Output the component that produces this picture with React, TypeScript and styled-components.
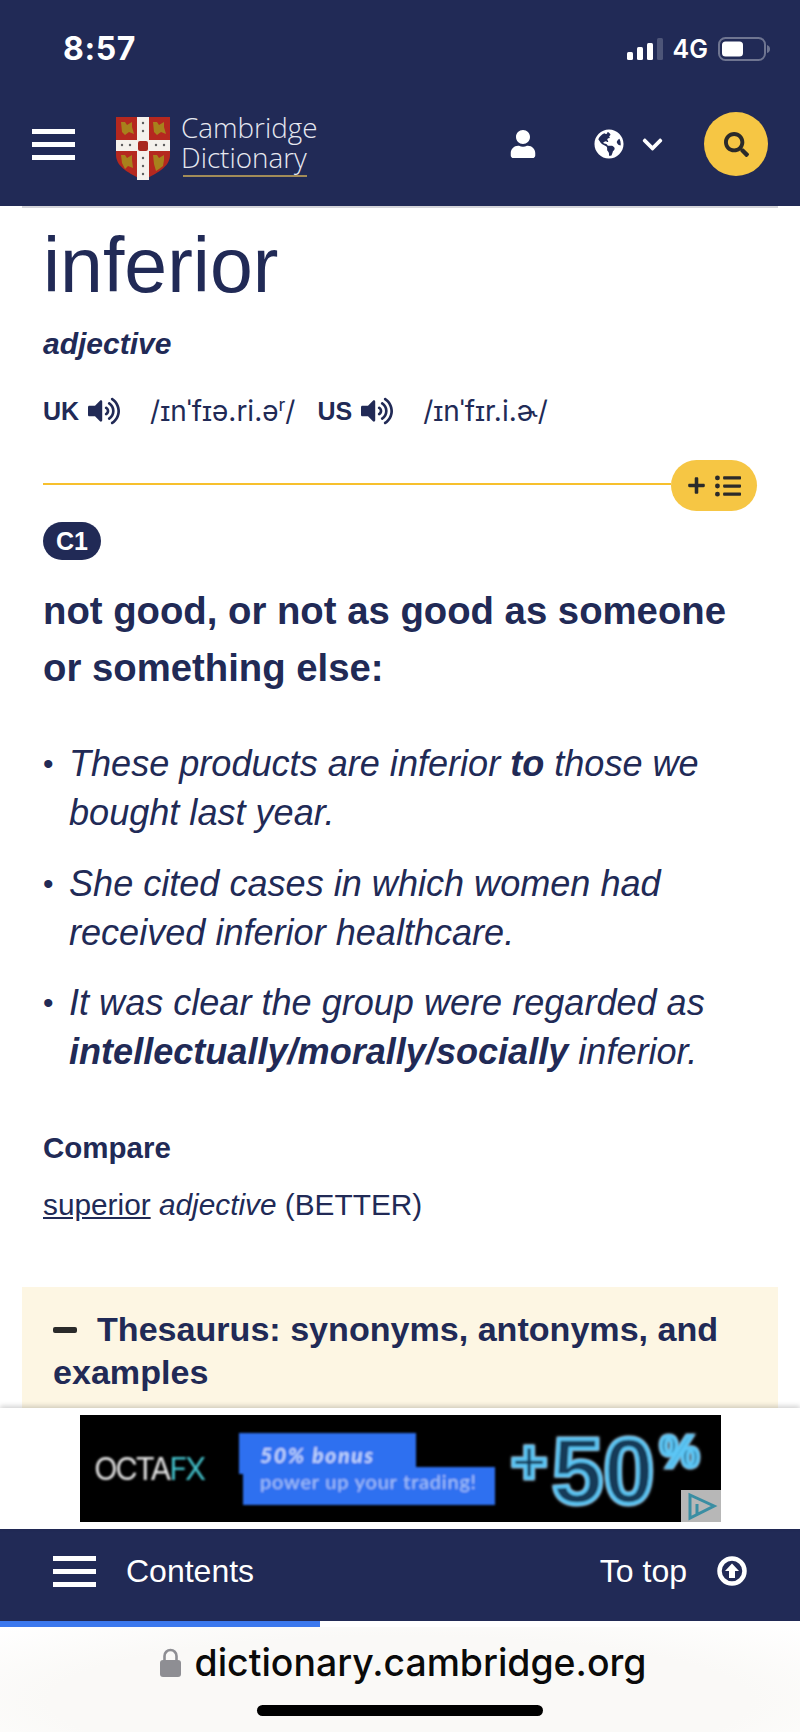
import React from 'react';
import styled, {createGlobalStyle} from 'styled-components';
import {FaChevronDown, FaGlobeAmericas, FaListUl, FaPlus, FaSearch, FaUser, FaVolumeUp} from 'react-icons/fa';

const navy = '#212a56';
const yellow = '#f6c644';

const GlobalStyle = createGlobalStyle`
  html, body {
    margin: 0;
    padding: 0;
    background: #fff;
  }
  * {
    box-sizing: border-box;
  }
`;

const Page = styled.div`
  width: 800px;
  height: 1732px;
  overflow: hidden;
  display: flex;
  flex-direction: column;
  font-family: "Liberation Sans", "DejaVu Sans", sans-serif;
  color: ${navy};
`;

const Header = styled.header`
  height: 206px;
  flex: none;
  background: ${navy};
  color: #fff;
`;

const StatusBar = styled.div`
  height: 100px;
  padding: 31px 30px 0 63px;
  display: flex;
  justify-content: space-between;
  font-family: Inter, sans-serif;
`;

const Time = styled.span`
  font-size: 32px;
  line-height: 36px;
  font-weight: 700;
  letter-spacing: 0.6px;
`;

const StatusIcons = styled.div`
  display: flex;
  align-items: center;
  height: 36px;
  gap: 10px;
`;

const Network = styled.span`
  font-size: 25px;
  font-weight: 600;
`;

const NavRow = styled.div`
  display: flex;
  align-items: center;
  height: 64px;
  margin-top: 12px;
  padding: 0 32px;
`;

const Burger = styled.div<{$width: number}>`
  width: ${p => p.$width}px;
  height: 31px;
  flex: none;
  display: flex;
  flex-direction: column;
  justify-content: space-between;

  > i {
    display: block;
    height: 5px;
    background: #fff;
  }
`;

const Logo = styled.div`
  display: flex;
  align-items: flex-start;
  gap: 11px;
  margin-left: 41px;
  height: 64px;

  > svg {
    margin-top: 5px;
  }
`;

const LogoText = styled.div`
  font-family: "Open Sans", sans-serif;
  font-size: 27.8px;
  font-weight: 300;
  line-height: 30px;
  color: #e6e8f0;

  &::after {
    content: '';
    display: block;
    height: 2px;
    width: 124px;
    background: #a28c58;
    margin: 3px 0 0 2px;
  }
`;

const NavActions = styled.div`
  margin-left: auto;
  display: flex;
  align-items: center;
`;

const UserIcon = styled(FaUser)`
  font-size: 28px;
  margin-right: 57px;
`;

const GlobeIcon = styled(FaGlobeAmericas)`
  font-size: 30px;
  margin-right: 17px;
`;

const Chevron = styled(FaChevronDown)`
  font-size: 23px;
  margin-right: 40px;
`;

const SearchButton = styled.div`
  width: 64px;
  height: 64px;
  border-radius: 50%;
  background: ${yellow};
  color: #2a2a2a;
  display: flex;
  align-items: center;
  justify-content: center;
  font-size: 25px;
`;

const Sheet = styled.main`
  flex: 1;
  min-height: 0;
  overflow: hidden;
  position: relative;

  &::before {
    content: '';
    position: absolute;
    top: 0;
    left: 22px;
    right: 22px;
    height: 2px;
    background: #d5d5da;
  }
`;

const Entry = styled.section`
  padding: 0 43px;
`;

const Headword = styled.h1`
  margin: 0;
  padding-top: 17px;
  font-size: 77px;
  line-height: 84px;
  font-weight: 400;
`;

const PartOfSpeech = styled.div`
  margin-top: 20px;
  font-size: 30px;
  line-height: 34px;
  font-weight: 700;
  font-style: italic;
`;

const PronRow = styled.div`
  display: flex;
  align-items: center;
  height: 36px;
  margin-top: 32px;
`;

const Region = styled.span`
  font-size: 25px;
  font-weight: 700;
`;

const Speaker = styled(FaVolumeUp)`
  font-size: 32px;
  margin-left: 9px;
  flex: none;
`;

const Ipa = styled.span`
  font-family: Inter, "Liberation Sans", sans-serif;
  font-size: 28px;
  margin-left: 30px;
  margin-right: 22px;
  white-space: nowrap;

  sup {
    font-size: 18px;
    line-height: 0;
  }
`;

const DividerRow = styled.div`
  display: flex;
  align-items: center;
  margin-top: 31px;
  height: 51px;
`;

const DividerLine = styled.div`
  flex: 1;
  height: 2px;
  margin-top: -4px;
  background: #f7c02d;
`;

const AddButton = styled.div`
  width: 86px;
  height: 51px;
  border-radius: 26px;
  background: ${yellow};
  color: #2a2a2a;
  display: flex;
  align-items: center;
  justify-content: center;
  gap: 9px;
`;

const PlusIcon = styled(FaPlus)`
  font-size: 19px;
`;

const ListIcon = styled(FaListUl)`
  font-size: 26px;
`;

const Level = styled.span`
  display: inline-flex;
  align-items: center;
  justify-content: center;
  width: 58px;
  height: 38px;
  margin-top: 11px;
  border-radius: 19px;
  background: ${navy};
  color: #fff;
  font-size: 25px;
  font-weight: 700;
`;

const Definition = styled.p`
  margin: 22px 0 0;
  font-size: 38.3px;
  line-height: 57px;
  font-weight: 700;
`;

const Examples = styled.ul`
  list-style: none;
  margin: 43px 0 0;
  padding: 0;
`;

const Example = styled.li`
  position: relative;
  padding-left: 26px;
  margin-bottom: 21.5px;
  font-size: 36.1px;
  line-height: 49px;
  font-style: italic;

  &::before {
    content: '•';
    position: absolute;
    left: 0;
    font-style: normal;
    font-size: 30px;
  }
`;

const CompareLabel = styled.div`
  margin-top: 55px;
  font-size: 29.5px;
  line-height: 34px;
  font-weight: 700;
`;

const CompareLine = styled.div`
  margin-top: 23px;
  font-size: 29.8px;
  line-height: 34px;

  a {
    color: inherit;
    text-decoration: underline;
  }
`;

const Thesaurus = styled.div`
  margin: 65px 22px 0;
  padding: 21px 31px 40px;
  background: #fdf6e3;
  font-size: 34.1px;
  line-height: 43px;
  font-weight: 700;
`;

const Minus = styled.span`
  display: inline-block;
  width: 24px;
  height: 6px;
  margin-right: 20px;
  vertical-align: 8px;
  border-radius: 2px;
  background: #2a2a2a;
`;

const AdBar = styled.div`
  height: 121px;
  flex: none;
  padding-top: 7px;
  display: flex;
  justify-content: center;
  background: #fff;
  box-shadow: 0 -2px 5px rgba(0, 0, 0, 0.18);
  position: relative;
`;

const BottomBar = styled.nav`
  height: 92px;
  flex: none;
  display: flex;
  align-items: center;
  padding: 0 53px 8px;
  background: ${navy};
  color: #fff;
  font-size: 32px;
`;

const Contents = styled.span`
  margin-left: 30px;
`;

const ToTop = styled.span`
  margin-left: auto;
  margin-right: 30px;
`;

const Progress = styled.div`
  height: 6px;
  flex: none;
  background: #fff;

  > div {
    height: 100%;
    background: #3b78ee;
  }
`;

const AddressBar = styled.div`
  height: 105px;
  flex: none;
  background: radial-gradient(ellipse at 50% 70%, #faf9f7 62%, #ffffff 100%);
  display: flex;
  flex-direction: column;
  align-items: center;
`;

const Url = styled.div`
  display: flex;
  align-items: center;
  gap: 14px;
  margin-top: 13px;
  padding-left: 6px;
  height: 44px;
  font-family: Inter, sans-serif;
  font-size: 37.4px;
  font-weight: 500;
  color: #0a0a0a;
`;

const HomeIndicator = styled.div`
  width: 286px;
  height: 11px;
  margin-top: 21px;
  border-radius: 6px;
  background: #000;
`;

const Signal = () => (
  <svg width="36" height="22" viewBox="0 0 36 22">
    <rect x="0" y="14" width="6" height="8" rx="1.5" fill="#fff" />
    <rect x="10" y="9" width="6" height="13" rx="1.5" fill="#fff" />
    <rect x="20" y="5" width="6" height="17" rx="1.5" fill="#fff" />
    <rect x="30" y="0" width="6" height="22" rx="1.5" fill="#4d5578" />
  </svg>
);

const Battery = () => (
  <svg width="52" height="24" viewBox="0 0 52 24">
    <rect x="1" y="1" width="46" height="22" rx="6.5" fill="none" stroke="#6f7591" strokeWidth="2" />
    <rect x="4" y="4.5" width="21" height="15" rx="3.5" fill="#fff" />
    <path d="M49 8 q3 1 3 4 q0 3 -3 4z" fill="#6f7591" />
  </svg>
);

const Shield = () => (
  <svg width="54" height="63" viewBox="0 0 54 63">
    <path d="M0 0H54V38C54 50 40 57 27 63C14 57 0 50 0 38Z" fill="#b5281f" />
    <rect x="21" y="0" width="12" height="63" fill="#f4f1ec" />
    <rect x="0" y="23" width="54" height="11" fill="#f4f1ec" />
    <g fill="#a8811c">
      <path d="M5 5h4l2 3 5-3v5l2 7-5-2-4 3-3-3z" />
      <path d="M37 5h4l2 3 5-3v5l2 7-5-2-4 3-3-3z" />
      <path d="M5 38h4l2 3 5-3v5l1 8-5-2-3 3-3-6z" />
      <path d="M37 38h4l2 3 5-3v5l-1 6-4 3-3 2-2-7z" />
    </g>
    <g fill="#5d5d5d">
      <circle cx="27" cy="6" r="1.2" /><circle cx="27" cy="14" r="1.2" />
      <circle cx="6" cy="28" r="1.2" /><circle cx="14" cy="28" r="1.2" />
      <circle cx="40" cy="28" r="1.2" /><circle cx="48" cy="28" r="1.2" />
      <circle cx="27" cy="41" r="1.2" /><circle cx="27" cy="49" r="1.2" /><circle cx="27" cy="57" r="1.2" />
    </g>
    <rect x="22" y="24" width="10" height="10" rx="2" fill="#a8281f" />
  </svg>
);

const NeonGlyph = ({x, y, size, children}: {x: number, y: number, size: number, children: string}) => (
  <g fontSize={size} fontFamily="'Liberation Sans', sans-serif" fontWeight="700">
    <text x={x} y={y} fill="#10202e" stroke="#7f95a8" strokeWidth="5" filter="url(#glow)">{children}</text>
    <text x={x} y={y} fill="#123a58" stroke="#5cc6f5" strokeWidth="3.5" filter="url(#soft)">{children}</text>
  </g>
);

// banner is one blurry picture in the screenshot
const Banner = () => (
  <svg width="641" height="107" viewBox="0 0 641 107">
    <defs>
      <filter id="soft"><feGaussianBlur stdDeviation="0.8" /></filter>
      <filter id="glow"><feGaussianBlur stdDeviation="1.6" /></filter>
    </defs>
    <rect width="641" height="107" fill="#000" />
    <g filter="url(#soft)" fontFamily="Lato, sans-serif">
      <text x="14" y="65" fontSize="31" letterSpacing="-2.5" fill="#e4e4e4" fontFamily="Inter, sans-serif">OCTA<tspan fill="#43c0c9">FX</tspan></text>
      <path d="M159 18H336V52H415V90H163V59H159Z" fill="#2f6ff0" />
      <text x="180" y="48" fontSize="21" textLength={113} fontStyle="italic" fontWeight="700" fill="#c4d6fb">50% bonus</text>
      <text x="180" y="74" fontSize="20" textLength={216} fill="#a9c4f8">power up your trading!</text>
    </g>
    <NeonGlyph x={431} y={68} size={62}>+</NeonGlyph>
    <NeonGlyph x={472} y={88} size={92}>50</NeonGlyph>
    <NeonGlyph x={580} y={52} size={44}>%</NeonGlyph>
    <rect x="601" y="75" width="40" height="32" fill="#b7b7b7" />
    <path d="M610 80V103L634 91Z M617 89V99" fill="none" stroke="#3a8ea3" strokeWidth="3" />
  </svg>
);

const ArrowCircle = () => (
  <svg width="30" height="30" viewBox="0 0 30 30">
    <circle cx="15" cy="15" r="12.5" fill="none" stroke="#fff" strokeWidth="4.5" />
    <path d="M15 7.5L22 15H18V22H12V15H8Z" fill="#fff" />
  </svg>
);

const Lock = () => (
  <svg width="21" height="29" viewBox="0 0 21 29">
    <path d="M4.5 12V8a6 6 0 0 1 12 0v4" fill="none" stroke="#8e8e93" strokeWidth="2.6" />
    <rect x="0" y="12" width="21" height="17" rx="3" fill="#8e8e93" />
  </svg>
);

const App = () => {
  return (
    <Page>
      <GlobalStyle />
      <Header>
        <StatusBar>
          <Time>8:57</Time>
          <StatusIcons>
            <Signal />
            <Network>4G</Network>
            <Battery />
          </StatusIcons>
        </StatusBar>
        <NavRow>
          <Burger $width={43}><i /><i /><i /></Burger>
          <Logo>
            <Shield />
            <LogoText>Cambridge<br />Dictionary</LogoText>
          </Logo>
          <NavActions>
            <UserIcon />
            <GlobeIcon />
            <Chevron />
            <SearchButton><FaSearch /></SearchButton>
          </NavActions>
        </NavRow>
      </Header>

      <Sheet>
        <Entry>
          <Headword>inferior</Headword>
          <PartOfSpeech>adjective</PartOfSpeech>
          <PronRow>
            <Region>UK</Region>
            <Speaker />
            <Ipa>/ɪnˈfɪə.ri.ə<sup>r</sup>/</Ipa>
            <Region>US</Region>
            <Speaker />
            <Ipa>/ɪnˈfɪr.i.ɚ/</Ipa>
          </PronRow>
          <DividerRow>
            <DividerLine />
            <AddButton><PlusIcon /><ListIcon /></AddButton>
          </DividerRow>
          <Level>C1</Level>
          <Definition>not good, or not as good as someone or something else:</Definition>
          <Examples>
            <Example>These products are inferior <b>to</b> those we bought last year.</Example>
            <Example>She cited cases in which women had received inferior healthcare.</Example>
            <Example>It was clear the group were regarded as <b>intellectually/morally/socially</b> inferior.</Example>
          </Examples>
          <CompareLabel>Compare</CompareLabel>
          <CompareLine><a href="#superior">superior</a> <i>adjective</i> (BETTER)</CompareLine>
        </Entry>
        <Thesaurus><Minus />Thesaurus: synonyms, antonyms, and examples</Thesaurus>
      </Sheet>

      <AdBar><Banner /></AdBar>

      <BottomBar>
        <Burger $width={43}><i /><i /><i /></Burger>
        <Contents>Contents</Contents>
        <ToTop>To top</ToTop>
        <ArrowCircle />
      </BottomBar>
      <Progress><div style={{width: '40%'}} /></Progress>

      <AddressBar>
        <Url><Lock />dictionary.cambridge.org</Url>
        <HomeIndicator />
      </AddressBar>
    </Page>
  );
};

export default App;
